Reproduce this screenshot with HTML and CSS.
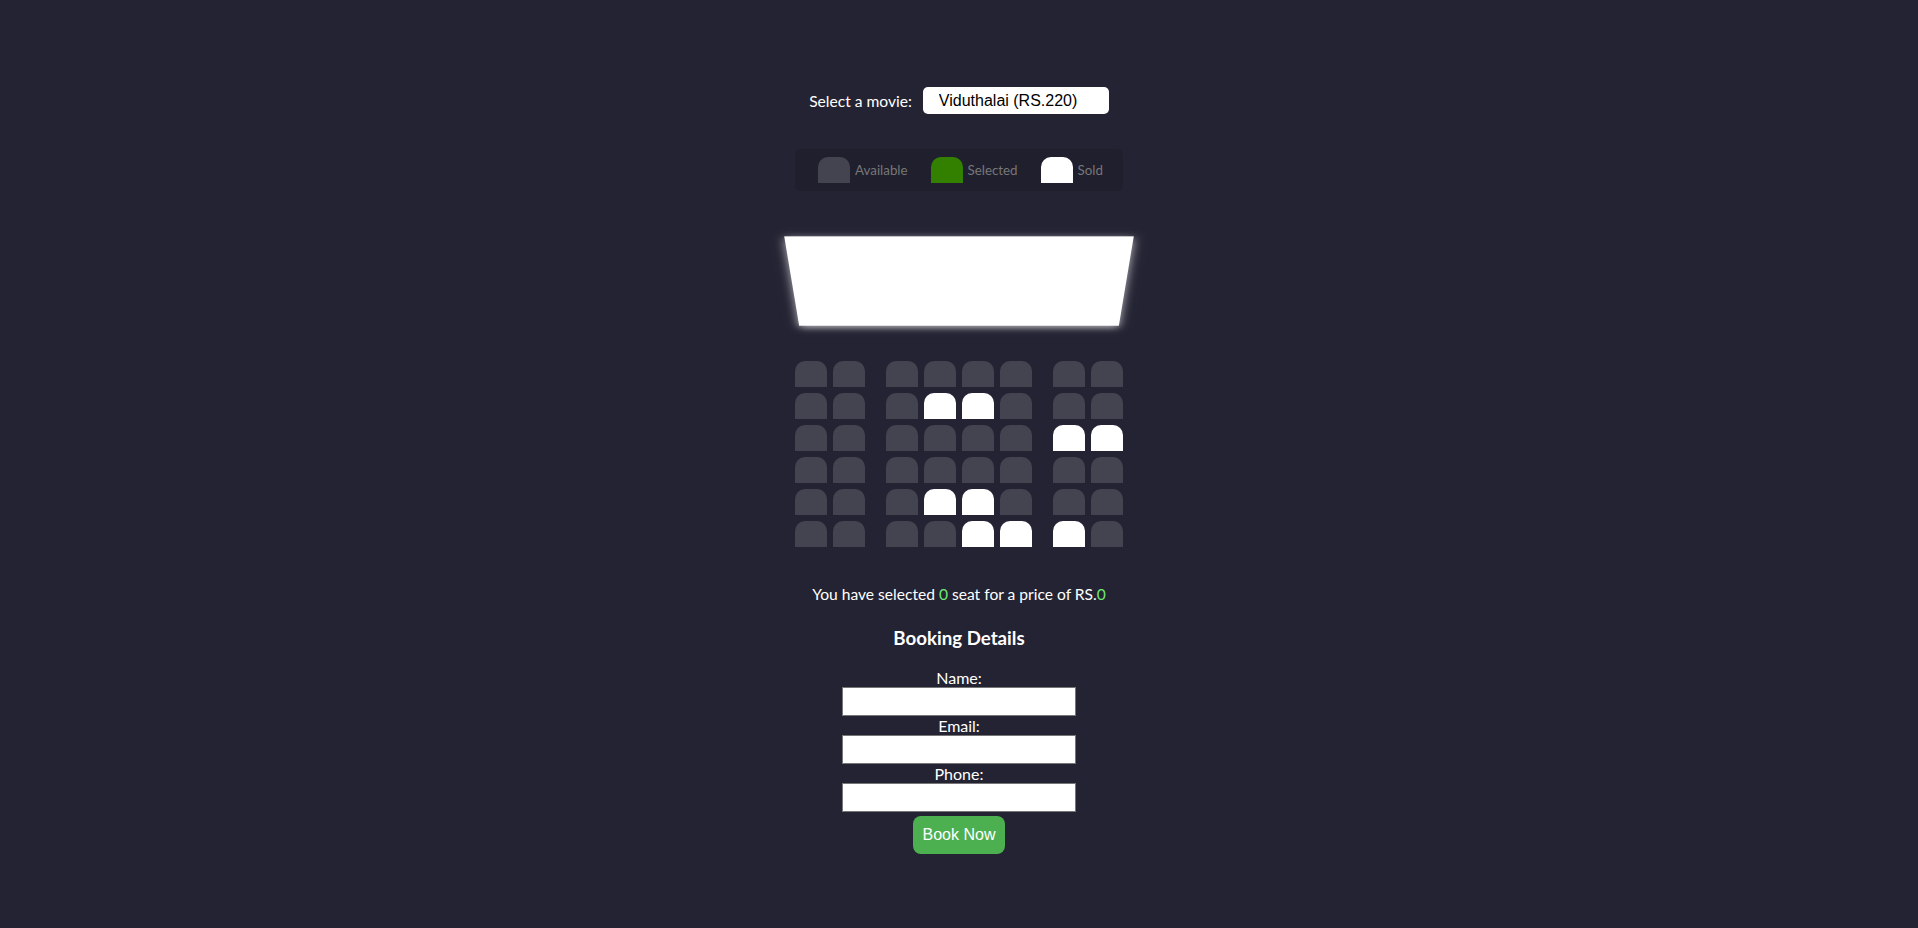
FILE: index.html
```html
<!DOCTYPE html>
<html lang="en">
<head>
<meta charset="UTF-8">
<title>Movie Seat Booking</title>
<link rel="stylesheet" href="styles.css">
</head>
<body>
  <div class="movie-container">
    <label class="movie-label" for="movie">Select a movie:</label>
    <select id="movie" class="movie-select">
      <option value="220">Viduthalai (RS.220)</option>
      <option value="200">Thunivu (RS.200)</option>
      <option value="180">Varisu (RS.180)</option>
    </select>
  </div>

  <ul class="showcase">
    <li class="showcase-item"><div class="seat"></div><small class="showcase-text">Available</small></li>
    <li class="showcase-item"><div class="seat selected"></div><small class="showcase-text">Selected</small></li>
    <li class="showcase-item"><div class="seat occupied"></div><small class="showcase-text">Sold</small></li>
  </ul>

  <div class="container">
    <div class="screen-wrap"><div class="screen"></div></div>
    <div class="seats">
      <div class="row">
        <div class="seat"></div><div class="seat"></div><div class="seat"></div><div class="seat"></div>
        <div class="seat"></div><div class="seat"></div><div class="seat"></div><div class="seat"></div>
      </div>
      <div class="row">
        <div class="seat"></div><div class="seat"></div><div class="seat"></div><div class="seat occupied"></div>
        <div class="seat occupied"></div><div class="seat"></div><div class="seat"></div><div class="seat"></div>
      </div>
      <div class="row">
        <div class="seat"></div><div class="seat"></div><div class="seat"></div><div class="seat"></div>
        <div class="seat"></div><div class="seat"></div><div class="seat occupied"></div><div class="seat occupied"></div>
      </div>
      <div class="row">
        <div class="seat"></div><div class="seat"></div><div class="seat"></div><div class="seat"></div>
        <div class="seat"></div><div class="seat"></div><div class="seat"></div><div class="seat"></div>
      </div>
      <div class="row">
        <div class="seat"></div><div class="seat"></div><div class="seat"></div><div class="seat occupied"></div>
        <div class="seat occupied"></div><div class="seat"></div><div class="seat"></div><div class="seat"></div>
      </div>
      <div class="row">
        <div class="seat"></div><div class="seat"></div><div class="seat"></div><div class="seat"></div>
        <div class="seat occupied"></div><div class="seat occupied"></div><div class="seat occupied"></div><div class="seat"></div>
      </div>
    </div>
  </div>

  <p class="text">You have selected <span class="count">0</span> seat for a price of RS.<span class="total">0</span></p>

  <h3 class="booking-title">Booking Details</h3>
  <form class="booking-form">
    <label class="field-label" for="name">Name:</label>
    <input class="field-input" type="text" id="name">
    <label class="field-label" for="email">Email:</label>
    <input class="field-input" type="email" id="email">
    <label class="field-label" for="phone">Phone:</label>
    <input class="field-input" type="tel" id="phone">
    <button class="book-btn" type="button">Book Now</button>
  </form>
</body>
</html>
```

FILE: styles.css
```css
* {
  box-sizing: border-box;
}

body {
  margin: 0;
  padding-top: 87px;
  background-color: #242333;
  color: #fff;
  font-family: Lato, "Open Sans", sans-serif;
  font-size: 16px;
  display: flex;
  flex-direction: column;
  align-items: center;
  min-height: 928px;
}

.movie-container {
  display: flex;
  align-items: center;
  height: 27px;
}

.movie-label {
  font-size: 15.6px;
}

.movie-select {
  margin-left: 11px;
  width: 186px;
  height: 27px;
  padding: 0 16px;
  border: 0;
  border-radius: 5px;
  background-color: #fff;
  color: #000;
  font-family: "Liberation Sans", Arial, sans-serif;
  font-size: 16px;
  appearance: none;
  -webkit-appearance: none;
}

.showcase {
  margin: 35px 0 0;
  padding: 5px 10px;
  list-style: none;
  display: flex;
  justify-content: space-between;
  background: rgba(0, 0, 0, 0.1);
  border-radius: 5px;
  color: #777;
}

.showcase-item {
  display: flex;
  align-items: center;
  margin: 0 10px;
}

.showcase-text {
  margin-left: 2px;
  font-size: 13.33px;
}

.seat {
  width: 32px;
  height: 26px;
  margin: 3px;
  background-color: #444451;
  border-top-left-radius: 10px;
  border-top-right-radius: 10px;
}

.seat.selected {
  background-color: #338000;
}

.seat.occupied {
  background-color: #fff;
}

.row .seat:nth-of-type(2) {
  margin-right: 18px;
}

.row .seat:nth-last-of-type(2) {
  margin-left: 18px;
}

.container {
  margin-top: 29px;
  display: flex;
  flex-direction: column;
}

.screen-wrap {
  perspective: 1000px;
}

.screen {
  width: 100%;
  height: 126px;
  background-color: #fff;
  transform: rotateX(-45deg);
  box-shadow: 0 3px 10px rgba(255, 255, 255, 0.7);
}

.seats {
  margin-top: 12px;
}

.row {
  display: flex;
}

.text {
  margin: 35px 0 0;
  font-size: 15.6px;
  line-height: 19px;
}

.text span {
  color: #6fe86f;
}

.booking-title {
  margin: 23px 0 0;
  font-size: 18.72px;
  font-weight: 700;
}

.booking-form {
  margin-top: 19px;
  display: flex;
  flex-direction: column;
  align-items: center;
}

.field-label {
  display: block;
  line-height: 19px;
}

.field-input {
  width: 234px;
  height: 29px;
  border: 1px solid #767676;
  background: #fff;
}

.book-btn {
  margin-top: 4px;
  padding: 10px;
  border: 0;
  border-radius: 8px;
  background-color: #4caf50;
  color: #fff;
  font-family: "Liberation Sans", Arial, sans-serif;
  font-size: 16px;
  line-height: 18px;
}
```
